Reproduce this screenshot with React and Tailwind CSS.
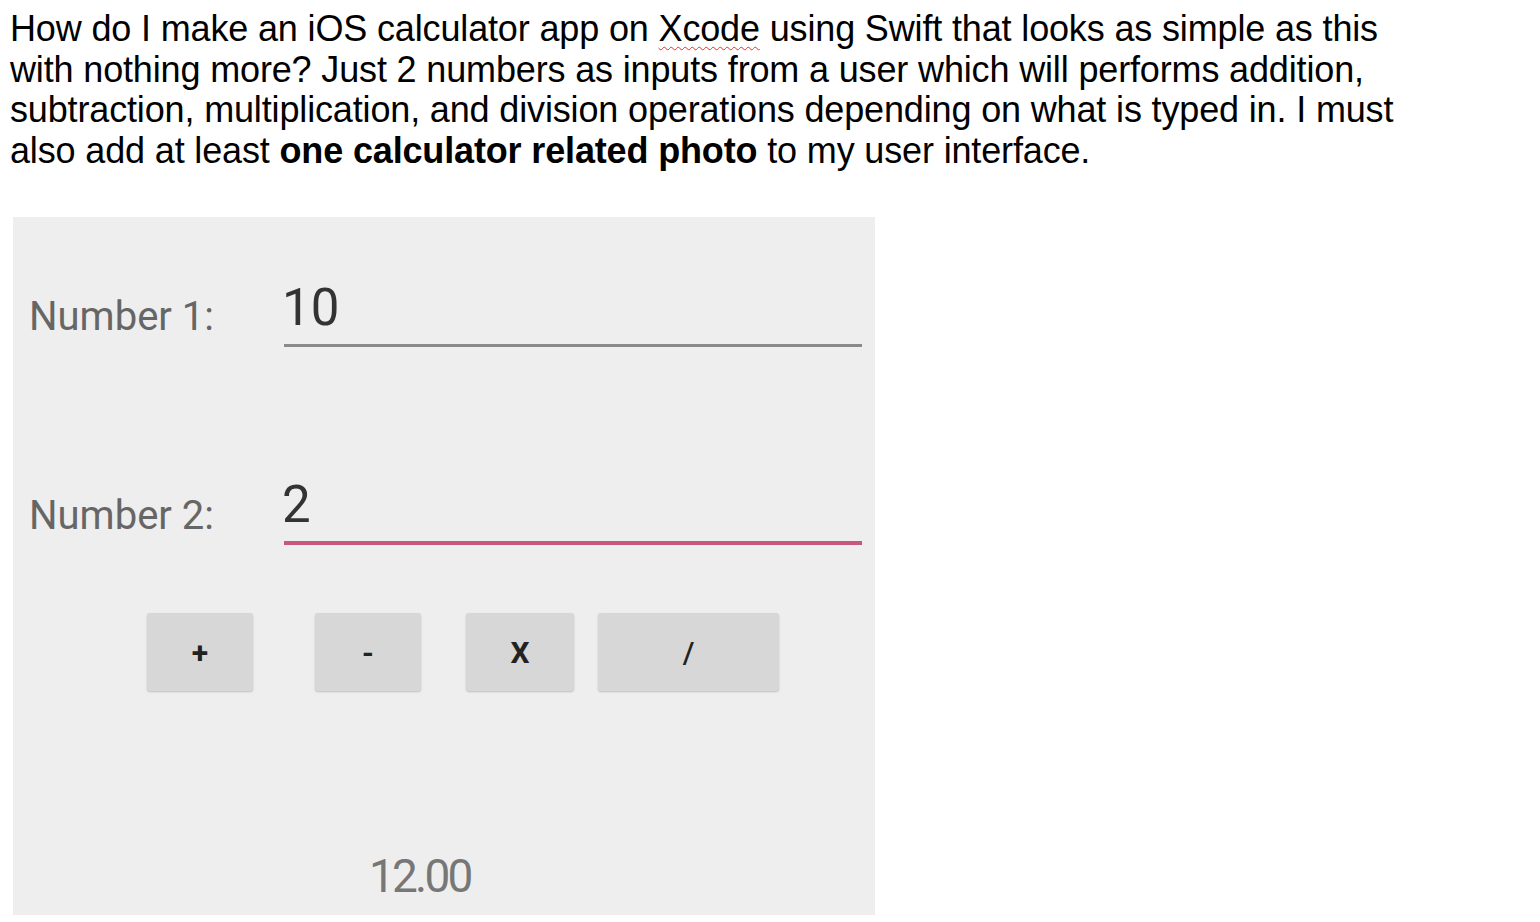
export default function App() {
  return (
    <div className="min-h-screen bg-white">
      <div
        className="pl-[10px] pt-[9px] text-[36px] leading-[40.5px] text-black tracking-[-0.15px]"
        style={{ fontFamily: '"Liberation Sans", Arial, sans-serif' }}
      >
        <p>
          How do I make an iOS calculator app on{" "}
          <span className="underline decoration-wavy decoration-[#e0312f] decoration-1 underline-offset-[5px]">
            Xcode
          </span>{" "}
          using Swift that looks as simple as this
          <br />
          with nothing more? Just 2 numbers as inputs from a user which will performs addition,
          <br />
          subtraction, multiplication, and division operations depending on what is typed in. I must
          <br />
          also add at least <b>one calculator related photo</b> to my user interface.
        </p>
      </div>

      <div
        className="ml-[13px] mt-[46px] w-[862px] h-[698px] bg-[#eeeeee] flex flex-col"
        style={{ fontFamily: 'Roboto, "Noto Sans", sans-serif' }}
      >
        <div className="flex items-end mt-[66px]">
          <div className="w-[271px] pl-[16px] mb-[10px] text-[40px] leading-[40px] text-[#666]">Number 1:</div>
          <div className="flex-1 mr-[13px] border-b-[3px] border-[#8a8a8a] pb-[11px] indent-[-2px] text-[51px] leading-[50px] text-[#333]">
            10
          </div>
        </div>

        <div className="flex items-end mt-[133px]">
          <div className="w-[271px] pl-[16px] mb-[9px] text-[40px] leading-[40px] text-[#666]">Number 2:</div>
          <div className="flex-1 mr-[13px] border-b-[4px] border-[#c9577b] pb-[11px] indent-[-2px] text-[51px] leading-[50px] text-[#333]">
            2
          </div>
        </div>

        <div className="flex mt-[68px] pl-[134px] h-[78px]">
          <button className="w-[106px] rounded-[3px] bg-[#d7d7d7] shadow-[0_1px_2px_rgba(0,0,0,0.2)] text-[30px] font-bold text-[#222]">+</button>
          <button className="ml-[62px] w-[106px] rounded-[3px] bg-[#d7d7d7] shadow-[0_1px_2px_rgba(0,0,0,0.2)] text-[30px] font-bold text-[#222]">-</button>
          <button className="ml-[45px] w-[108px] rounded-[3px] bg-[#d7d7d7] shadow-[0_1px_2px_rgba(0,0,0,0.2)] text-[30px] font-bold text-[#222]">X</button>
          <button className="ml-[24px] w-[181px] rounded-[3px] bg-[#d7d7d7] shadow-[0_1px_2px_rgba(0,0,0,0.2)] text-[30px] font-medium text-[#222]">/</button>
        </div>

        <div className="mt-[162px] pl-[356px] text-[46px] leading-[46px] text-[#777] tracking-[-2.8px]">12.00</div>
      </div>
    </div>
  );
}
